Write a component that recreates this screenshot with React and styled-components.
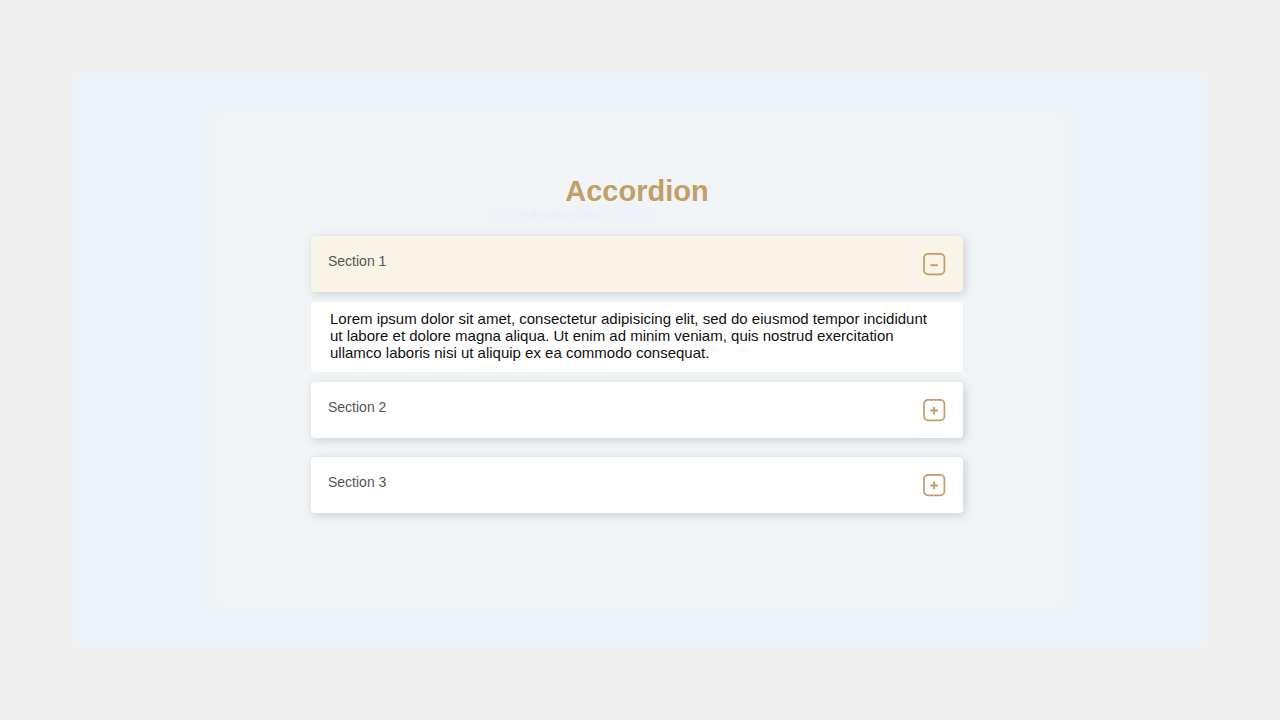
import React, { useState } from "react";
import styled, { createGlobalStyle } from "styled-components";

const GlobalStyle = createGlobalStyle`
  *, *::before, *::after {
    box-sizing: border-box;
  }
  body {
    margin: 0;
    background: #eeeeee;
    font-family: "Liberation Sans", Arial, sans-serif;
  }
`;

const Page = styled.div`
  display: flex;
  min-height: 100vh;
  padding: 72px;
`;

const Backdrop = styled.div`
  display: flex;
  flex: 1;
  justify-content: center;
  padding: 42px 24px;
  background: #eef3f7;
`;

const Sheet = styled.main`
  flex: 1;
  max-width: 840px;
  padding: 60px 97px 60px 91px;
  background: #f0f4f7;
`;

const Header = styled.header`
  position: relative;
  margin-bottom: 28px;
`;

const Title = styled.h1`
  margin: 0;
  color: #c29f66;
  font-size: 29px;
  line-height: 34px;
  text-align: center;
`;

const Hint = styled.span`
  position: absolute;
  top: 30px;
  left: 179px;
  width: 164px;
  padding-left: 29px;
  background: #eff3f7;
  color: #e9eef2;
  font-size: 11px;
  line-height: 20px;
`;

const List = styled.div`
  display: flex;
  flex-direction: column;
`;

const Item = styled.section`
  margin-bottom: ${({ $open }) => ($open ? 10 : 19)}px;
`;

const Heading = styled.h2`
  margin: 0;
`;

const Bar = styled.button`
  display: flex;
  justify-content: space-between;
  align-items: flex-start;
  width: 100%;
  height: 56px;
  padding: 17px;
  border: 0;
  border-radius: 4px;
  background: ${({ $open }) => ($open ? "#f9f4e8" : "#ffffff")};
  box-shadow: 2px 2px 10px rgba(60, 60, 60, 0.2);
  color: #555555;
  font-family: inherit;
  font-size: 14px;
  line-height: 17px;
  text-align: left;
  cursor: pointer;
`;

const Toggle = styled.svg`
  flex: none;
  width: 23px;
  height: 23px;
  fill: none;
  stroke: #c39c62;
`;

const Content = styled.p`
  margin: 10px 0 0;
  padding: 8px 24px 11px 19px;
  border-radius: 4px;
  background: #ffffff;
  color: #111111;
  font-size: 15px;
  line-height: 17px;
`;

const LOREM =
  "Lorem ipsum dolor sit amet, consectetur adipisicing elit, sed do eiusmod tempor incididunt ut labore et dolore magna aliqua. Ut enim ad minim veniam, quis nostrud exercitation ullamco laboris nisi ut aliquip ex ea commodo consequat.";

const SECTIONS = ["Section 1", "Section 2", "Section 3"];

function ToggleIcon({ open }) {
  return (
    <Toggle viewBox="0 0 23 23" aria-hidden="true">
      <rect x="1" y="0.9" width="20.4" height="20.4" rx="4" strokeWidth="1.7" />
      <path strokeWidth="1.9" d={open ? "M7.4 12.2h7.4" : "M7.3 11.5h7.6M11.1 7.7v7.6"} />
    </Toggle>
  );
}

function Section({ id, title, open, onToggle }) {
  return (
    <Item $open={open}>
      <Heading>
        <Bar
          type="button"
          $open={open}
          aria-expanded={open}
          aria-controls={id}
          onClick={onToggle}
        >
          {title}
          <ToggleIcon open={open} />
        </Bar>
      </Heading>
      {open && <Content id={id}>{LOREM}</Content>}
    </Item>
  );
}

export default function App() {
  const [active, setActive] = useState(0);
  return (
    <>
      <GlobalStyle />
      <Page>
        <Backdrop>
          <Sheet>
            <Header>
              <Hint>Full-screen Snip</Hint>
              <Title>Accordion</Title>
            </Header>
            <List>
              {SECTIONS.map((title, i) => (
                <Section
                  key={title}
                  id={`section-${i + 1}`}
                  title={title}
                  open={active === i}
                  onToggle={() => setActive(active === i ? -1 : i)}
                />
              ))}
            </List>
          </Sheet>
        </Backdrop>
      </Page>
    </>
  );
}
